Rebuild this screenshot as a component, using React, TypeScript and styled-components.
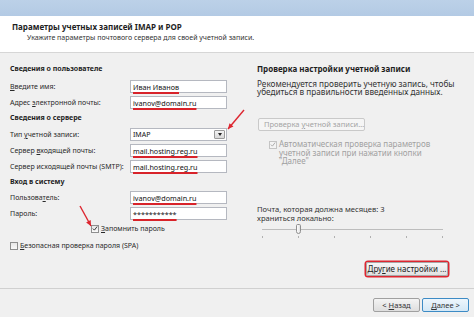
import React from 'react';
import styled, { createGlobalStyle } from 'styled-components';

const GlobalStyle = createGlobalStyle`
  html, body {
    margin: 0;
    padding: 0;
    background: #f0f0f0;
  }
  * {
    box-sizing: border-box;
  }
`;

const Window = styled.div`
  position: relative;
  width: 474px;
  height: 317px;
  overflow: hidden;
  background: #f0f0f0;
  font-family: "Noto Sans", "Open Sans", sans-serif;
  font-size: 8px;
  color: #1e1e1e;
`;

const TitleBar = styled.div`
  height: 16px;
  background: linear-gradient(#bcd1e8, #b3cae4);
`;

const Header = styled.div`
  height: 37px;
  padding: 5px 0 0 12px;
  background: #ffffff;
  border-bottom: 1px solid #d6d6d6;
`;

const HeaderTitle = styled.div`
  font-weight: bold;
  font-size: 8px;
  line-height: 11px;
`;

const HeaderText = styled.div`
  font-size: 7px;
  line-height: 11px;
  padding-left: 15px;
  color: #333;
`;

const Body = styled.div`
  display: flex;
  height: 236px;
  border-bottom: 1px solid #d0d0d0;
`;

const LeftColumn = styled.div`
  width: 237px;
  padding: 10px 0 0 10px;
  display: flex;
  flex-direction: column;
  font-size: 7px;
`;

const SectionTitle = styled.div<{ $mt?: number }>`
  font-weight: bold;
  line-height: 12px;
  white-space: nowrap;
  margin-top: ${(p) => p.$mt ?? 0}px;
`;

const Fields = styled.div<{ $mt: number }>`
  display: grid;
  grid-template-columns: 120px 97px;
  grid-auto-rows: 13px;
  row-gap: 3px;
  margin-top: ${(p) => p.$mt}px;
`;

const Label = styled.div`
  display: flex;
  align-items: center;
  color: #2a2a2a;
  white-space: nowrap;
`;

const Acc = styled.span`
  text-decoration: underline;
`;

const Input = styled.div`
  display: flex;
  align-items: center;
  height: 13px;
  padding-left: 2px;
  background: #fff;
  border: 1px solid #b5b8c0;
  font-size: 7.2px;
  white-space: nowrap;
  color: #111;
`;

const Marked = styled.span`
  text-decoration: underline;
  text-decoration-color: #d8232a;
  text-decoration-thickness: 1.5px;
  text-underline-offset: 1.5px;
`;

const Select = styled(Input)`
  justify-content: space-between;
  padding-right: 1px;
  font-size: 7px;
`;

const DropButton = styled.div`
  width: 11px;
  height: 9px;
  display: flex;
  align-items: center;
  justify-content: center;
  border: 1px solid #9a9a9a;
  border-radius: 1px;
  background: linear-gradient(#f4f4f4, #d8d8d8);
`;

const Triangle = styled.div`
  width: 0;
  height: 0;
  border-left: 2.5px solid transparent;
  border-right: 2.5px solid transparent;
  border-top: 3px solid #222;
`;

const CheckRow = styled.div<{ $mt: number; $ml: number }>`
  display: flex;
  align-items: center;
  gap: 2px;
  margin-top: ${(p) => p.$mt}px;
  margin-left: ${(p) => p.$ml}px;
  color: #2a2a2a;
  white-space: nowrap;
`;

const Box = styled.div<{ $disabled?: boolean }>`
  width: 8px;
  height: 8px;
  flex: none;
  display: flex;
  align-items: center;
  justify-content: center;
  border: 1px solid ${(p) => (p.$disabled ? '#c4c4c4' : '#8e8f8f')};
  background: ${(p) => (p.$disabled ? '#f4f4f4' : 'linear-gradient(#e8e8e8, #fafafa)')};
`;

const RightColumn = styled.div`
  flex: 1;
  padding: 10px 0 0 20px;
  display: flex;
  flex-direction: column;
`;

const Paragraph = styled.div`
  margin-top: 4.5px;
  line-height: 8.5px;
  font-size: 8.2px;
  color: #333;
  white-space: nowrap;
`;

const DisabledButton = styled.div`
  width: 107px;
  height: 13px;
  margin: 21px 0 0 1px;
  display: flex;
  align-items: center;
  padding-left: 5px;
  border: 1px solid #c9c9c9;
  border-radius: 2px;
  background: #f5f5f5;
  color: #a4a4a4;
  font-size: 7.5px;
  white-space: nowrap;
`;

const AutoCheck = styled.div`
  display: flex;
  align-items: flex-start;
  gap: 2px;
  margin: 10px 0 0 12px;
  color: #a0a0a0;
`;

const AutoText = styled.div`
  line-height: 8.5px;
  margin-top: -0.5px;
  white-space: nowrap;
`;

const RetentionRow = styled.div`
  display: flex;
  margin-top: 39px;
  line-height: 9px;
  font-size: 7.6px;
  color: #333;
  white-space: nowrap;
`;

const RetentionLabel = styled.div`
  width: 88px;
`;

const Slider = styled.div`
  position: relative;
  width: 181px;
  height: 16px;
  margin-left: 5px;
`;

const Track = styled.div`
  position: absolute;
  left: 0;
  right: 0;
  top: 6px;
  height: 1px;
  background: #bdbdbd;
`;

const Thumb = styled.div`
  position: absolute;
  left: 34px;
  top: 1px;
  width: 5px;
  height: 10px;
  border: 1px solid #8f8f8f;
  border-radius: 2px 2px 3px 3px;
  background: linear-gradient(90deg, #fdfdfd, #e2e2e2);
`;

const Ticks = styled.div`
  position: absolute;
  left: 0;
  right: 0;
  bottom: 1px;
  display: flex;
  justify-content: space-between;
`;

const Tick = styled.div`
  width: 1px;
  height: 2px;
  background: #b0b0b0;
`;

const OtherSettings = styled.div`
  align-self: flex-end;
  margin: 23px 26px 0 0;
  width: 82px;
  height: 14px;
  display: flex;
  align-items: center;
  justify-content: center;
  border: 1px solid #a8a8a8;
  border-radius: 2px;
  background: linear-gradient(#f6f6f6, #e2e2e2);
  box-shadow: 0 0 0 1.5px #dd2630;
  color: #222;
  white-space: nowrap;
`;

const Footer = styled.div`
  display: flex;
  justify-content: flex-end;
  gap: 2px;
  padding: 9px 5px 0 0;
`;

const NavButton = styled.div<{ $primary?: boolean }>`
  width: 47px;
  height: 14px;
  display: flex;
  align-items: center;
  justify-content: center;
  border: 1px solid ${(p) => (p.$primary ? '#3d8bc5' : '#a0a0a0')};
  border-radius: 2px;
  background: ${(p) =>
    p.$primary ? 'linear-gradient(#eef6fc, #d4e8f6)' : 'linear-gradient(#f4f4f4, #dedede)'};
  color: #333;
  font-size: 7.5px;
  white-space: nowrap;
`;

const Annotations = styled.svg`
  position: absolute;
  left: 0;
  top: 0;
  pointer-events: none;
`;

const Check = ({ color }: { color: string }) => (
  <svg width="7" height="7" viewBox="0 0 7 7">
    <path d="M1 3.6 L2.8 5.4 L6 1.2" fill="none" stroke={color} strokeWidth="1.1" />
  </svg>
);

const Arrow = ({ x1, y1, x2, y2 }: { x1: number; y1: number; x2: number; y2: number }) => {
  const a = Math.atan2(y2 - y1, x2 - x1);
  const len = 6;
  const spread = 0.45;
  const p1 = [x2 - len * Math.cos(a - spread), y2 - len * Math.sin(a - spread)];
  const p2 = [x2 - len * Math.cos(a + spread), y2 - len * Math.sin(a + spread)];
  return (
    <g>
      <line x1={x1} y1={y1} x2={x2} y2={y2} stroke="#dd2630" strokeWidth="1.4" />
      <polygon points={`${x2},${y2} ${p1[0]},${p1[1]} ${p2[0]},${p2[1]}`} fill="#dd2630" />
    </g>
  );
};

const App = () => {
  const ticks = [0, 1, 2, 3, 4, 5];

  return (
    <Window>
      <GlobalStyle />
      <TitleBar />
      <Header>
        <HeaderTitle>Параметры учетных записей IMAP и POP</HeaderTitle>
        <HeaderText>Укажите параметры почтового сервера для своей учетной записи.</HeaderText>
      </Header>

      <Body>
        <LeftColumn>
          <SectionTitle>Сведения о пользователе</SectionTitle>
          <Fields $mt={5}>
            <Label><span><Acc>В</Acc>ведите имя:</span></Label>
            <Input><Marked>Иван Иванов</Marked></Input>
            <Label><span>Адрес <Acc>э</Acc>лектронной почты:</span></Label>
            <Input><Marked>ivanov@domain.ru</Marked></Input>
          </Fields>

          <SectionTitle $mt={3}>Сведения о сервере</SectionTitle>
          <Fields $mt={4}>
            <Label><span>Тип <Acc>у</Acc>четной записи:</span></Label>
            <Select>
              <span>IMAP</span>
              <DropButton><Triangle /></DropButton>
            </Select>
            <Label><span>Сервер <Acc>в</Acc>ходящей почты:</span></Label>
            <Input><Marked>mail.hosting.reg.ru</Marked></Input>
            <Label>Сервер исходящей почты (SMTP):</Label>
            <Input><Marked>mail.hosting.reg.ru</Marked></Input>
          </Fields>

          <SectionTitle $mt={3}>Вход в систему</SectionTitle>
          <Fields $mt={3}>
            <Label><span>Пользова<Acc>т</Acc>ель:</span></Label>
            <Input><Marked>ivanov@domain.ru</Marked></Input>
            <Label>Пароль:</Label>
            <Input><Marked>***********</Marked></Input>
          </Fields>

          <CheckRow $mt={4} $ml={81}>
            <Box><Check color="#333" /></Box>
            <span><Acc>З</Acc>апомнить пароль</span>
          </CheckRow>
          <CheckRow $mt={8} $ml={0}>
            <Box />
            <span><Acc>Б</Acc>езопасная проверка пароля (SPA)</span>
          </CheckRow>
        </LeftColumn>

        <RightColumn>
          <SectionTitle>Проверка настройки учетной записи</SectionTitle>
          <Paragraph>
            Рекомендуется проверить учетную запись, чтобы
            <br />
            убедиться в правильности введенных данных.
          </Paragraph>
          <DisabledButton>
            <span>Проверка <Acc>у</Acc>четной записи...</span>
          </DisabledButton>
          <AutoCheck>
            <Box $disabled><Check color="#a8a8a8" /></Box>
            <AutoText>
              Автоматическая проверка параметров
              <br />
              учетной записи при нажатии кнопки
              <br />
              "Далее"
            </AutoText>
          </AutoCheck>
          <RetentionRow>
            <RetentionLabel>
              Почта, которая должна
              <br />
              храниться локально:
            </RetentionLabel>
            <span>месяцев: 3</span>
          </RetentionRow>
          <Slider>
            <Track />
            <Ticks>
              {ticks.map((t) => (
                <Tick key={t} />
              ))}
            </Ticks>
            <Thumb />
          </Slider>
          <OtherSettings>
            <span>Дру<Acc>г</Acc>ие настройки ...</span>
          </OtherSettings>
        </RightColumn>
      </Body>

      <Footer>
        <NavButton><span>&lt; <Acc>Н</Acc>азад</span></NavButton>
        <NavButton $primary><span><Acc>Д</Acc>алее &gt;</span></NavButton>
      </Footer>

      <Annotations width="474" height="317" viewBox="0 0 474 317">
        <Arrow x1={244} y1={110} x2={228} y2={129} />
        <Arrow x1={80} y1={206} x2={91} y2={226} />
      </Annotations>
    </Window>
  );
};

export default App;
